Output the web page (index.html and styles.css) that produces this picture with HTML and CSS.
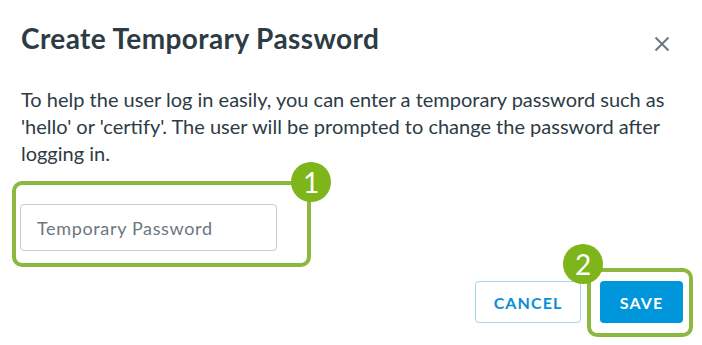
FILE: index.html
```html
<!DOCTYPE html>
<html>
<head>
<meta charset="utf-8">
<link rel="stylesheet" href="styles.css">
</head>
<body>
<div class="dialog">
  <div class="header">
    <h2 class="title">Create Temporary Password</h2>
    <button class="close" aria-label="Close">
      <svg width="16" height="16" viewBox="0 0 16 16"><path d="M1.5 1.5 L14.5 14.5 M14.5 1.5 L1.5 14.5" stroke="#6b7780" stroke-width="2" fill="none"/></svg>
    </button>
  </div>
  <p class="desc">To help the user log in easily, you can enter a temporary password such as 'hello' or 'certify'. The user will be prompted to change the password after logging in.</p>
  <div class="field">
    <input class="input" type="text" placeholder="Temporary Password">
    <div class="hl hl-field"><span class="badge badge-1">1</span></div>
  </div>
  <div class="footer">
    <button class="btn btn-cancel">CANCEL</button>
    <div class="save-wrap">
      <button class="btn btn-save">SAVE</button>
      <div class="hl hl-save"><span class="badge badge-2">2</span></div>
    </div>
  </div>
</div>
</body>
</html>
```
FILE: styles.css
```css
html, body {
  margin: 0;
  padding: 0;
  background: #ffffff;
}
body {
  font-family: Lato, "Noto Sans", sans-serif;
  color: #2d3b45;
  width: 702px;
  height: 345px;
  overflow: hidden;
}
.dialog {
  padding: 0 19px 0 21px;
}
.header {
  display: flex;
  justify-content: space-between;
  align-items: flex-start;
}
.title {
  margin: 21px 0 0 0;
  font-size: 28px;
  line-height: 34px;
  font-weight: 700;
  letter-spacing: 0.4px;
  color: #2d3b45;
}
.close {
  margin: 36px 13px 0 0;
  padding: 0;
  border: 0;
  background: none;
  width: 16px;
  height: 16px;
  display: flex;
}
.desc {
  margin: 31px 0 0 0;
  font-size: 20px;
  line-height: 27px;
  color: #2d3b45;
}
.field {
  position: relative;
  margin-top: 37px;
  width: 256px;
}
.input {
  box-sizing: border-box;
  width: 257px;
  height: 47px;
  margin-left: -1px;
  border: 1px solid #c7cdd1;
  border-radius: 4px;
  padding: 0 16px;
  font-family: Lato, "Noto Sans", sans-serif;
  font-size: 18px;
  letter-spacing: 0.65px;
  color: #2d3b45;
  display: block;
}
.input::placeholder {
  color: #6b7780;
}
.hl {
  position: absolute;
  border: 4px solid #8cb83f;
  border-radius: 10px;
  pointer-events: none;
}
.hl-field {
  left: -9px;
  top: -23px;
  right: -34px;
  bottom: -16px;
}
.badge {
  position: absolute;
  width: 40px;
  height: 40px;
  border-radius: 50%;
  background: #7db51b;
  color: #ffffff;
  font-size: 28px;
  line-height: 40px;
  text-align: center;
  font-weight: 400;
}
.badge-1 {
  right: -24px;
  top: -23px;
}
.footer {
  display: flex;
  justify-content: flex-end;
  gap: 19px;
  margin-top: 30px;
}
.btn {
  box-sizing: border-box;
  height: 42px;
  border-radius: 4px;
  font-family: Lato, "Noto Sans", sans-serif;
  font-weight: 700;
  font-size: 16px;
  letter-spacing: 1.1px;
  padding: 0;
}
.btn-cancel {
  width: 106px;
  background: #ffffff;
  border: 1px solid #a4d4ef;
  color: #0b8ed6;
}
.save-wrap {
  position: relative;
}
.btn-save {
  display: block;
  width: 83px;
  background: #0096db;
  border: 0;
  color: #ffffff;
}
.hl-save {
  left: -13px;
  top: -13px;
  right: -10px;
  bottom: -14px;
}
.badge-2 {
  left: -28px;
  top: -28px;
}
```
